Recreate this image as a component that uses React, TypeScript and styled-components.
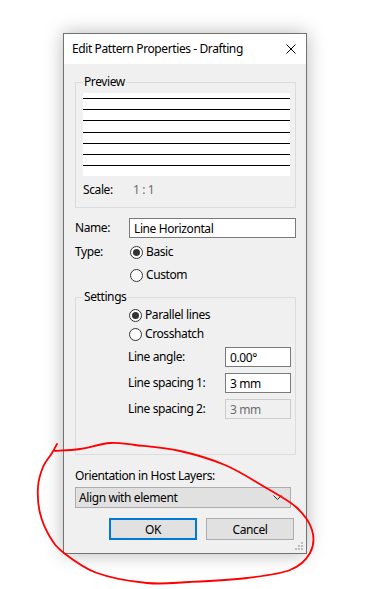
import React from "react";
import styled, { createGlobalStyle } from "styled-components";

const GlobalStyle = createGlobalStyle`
  html, body {
    margin: 0;
    padding: 0;
    background: #ffffff;
  }
  body {
    font-family: "Noto Sans", "Open Sans", sans-serif;
    font-size: 12px;
    letter-spacing: -0.4px;
    color: #000000;
  }
  input, button {
    font-family: "Noto Sans", "Open Sans", sans-serif;
    font-size: 12px;
    letter-spacing: -0.4px;
  }
`;

const Page = styled.div`
  position: relative;
  width: 388px;
  height: 589px;
  overflow: hidden;
  box-sizing: border-box;
  padding: 33px 0 0 63px;
`;

const Dialog = styled.div`
  position: relative;
  width: 244px;
  height: 521px;
  box-sizing: border-box;
  border: 1px solid #727272;
  background: #f0f0f0;
  box-shadow: 0 0 18px rgba(0, 0, 0, 0.28);
  display: flex;
  flex-direction: column;
`;

const TitleBar = styled.div`
  height: 30px;
  background: #ffffff;
  display: flex;
  align-items: center;
  justify-content: space-between;
  padding: 0 10px 0 8px;
`;

const Title = styled.span`
  line-height: 16px;
  white-space: nowrap;
`;

const CloseIcon = styled.svg`
  width: 10px;
  height: 10px;
  display: block;
`;

const Body = styled.div`
  display: flex;
  flex-direction: column;
  padding: 10px 10px 0 11px;
`;

const GroupBox = styled.fieldset<{ $height: number }>`
  margin: 0;
  padding: 0;
  min-inline-size: 0;
  height: ${(p) => p.$height}px;
  box-sizing: border-box;
  border: 1px solid #dcdcdc;
`;

const GroupLegend = styled.legend`
  margin-left: 7px;
  padding: 0 1px;
  line-height: 16px;
`;

const PreviewInner = styled.div`
  display: flex;
  flex-direction: column;
  padding: 3px 5px 0 7px;
`;

const PreviewCanvas = styled.svg`
  display: block;
  width: 207px;
  height: 83px;
  background: #ffffff;
`;

const ScaleRow = styled.div`
  display: flex;
  line-height: 16px;
  margin-top: 6px;
`;

const ScaleLabel = styled.span`
  width: 50px;
`;

const ScaleValue = styled.span`
  color: #6d6d6d;
`;

const FormRow = styled.div<{ $top: number }>`
  display: grid;
  grid-template-columns: 54px 1fr;
  align-items: center;
  margin-top: ${(p) => p.$top}px;
  min-height: 16px;
  line-height: 16px;
`;

const TopLabel = styled.span`
  align-self: start;
`;

const TextBox = styled.input<{ $disabled?: boolean }>`
  box-sizing: border-box;
  height: 20px;
  width: 100%;
  margin: 0;
  padding: 0 4px;
  color: ${(p) => (p.$disabled ? "#6d6d6d" : "#000000")};
  background: ${(p) => (p.$disabled ? "#f0f0f0" : "#ffffff")};
  border: 1px solid ${(p) => (p.$disabled ? "#cccccc" : "#7a7a7a")};
  outline: none;
`;

const RadioRow = styled.label`
  display: flex;
  align-items: center;
  gap: 3px;
  line-height: 16px;
  height: 16px;
`;

const RadioCircle = styled.span<{ $checked?: boolean }>`
  width: 13px;
  height: 13px;
  box-sizing: border-box;
  margin-left: 1px;
  border: 1px solid #333333;
  border-radius: 50%;
  background: #ffffff;
  display: inline-flex;
  align-items: center;
  justify-content: center;

  &::after {
    content: "";
    width: 7px;
    height: 7px;
    border-radius: 50%;
    background: #333333;
    display: ${(p) => (p.$checked ? "block" : "none")};
  }
`;

const RadioStack = styled.div<{ $gap: number }>`
  display: flex;
  flex-direction: column;
  gap: ${(p) => p.$gap}px;
`;

const SettingsBox = styled(GroupBox)`
  margin-top: 6px;
`;

const SettingsInner = styled.div`
  display: flex;
  flex-direction: column;
  padding: 2px 5px 0 52px;
`;

const FieldGrid = styled.div`
  display: grid;
  grid-template-columns: 97px 66px;
  row-gap: 6px;
  align-items: center;
  margin-top: 5px;
`;

const FieldLabel = styled.span`
  line-height: 16px;
`;

const PlainLabel = styled.div<{ $top: number }>`
  line-height: 16px;
  margin-top: ${(p) => p.$top}px;
`;

const ComboBox = styled.div`
  box-sizing: border-box;
  width: 216px;
  height: 21px;
  margin-top: 3px;
  padding: 0 8px 0 3px;
  display: flex;
  align-items: center;
  justify-content: space-between;
  background: #e1e1e1;
  border: 1px solid #adadad;
  line-height: 16px;
`;

const Chevron = styled.svg`
  width: 9px;
  height: 5px;
  display: block;
`;

const ButtonRow = styled.div`
  display: flex;
  justify-content: flex-end;
  gap: 9px;
  margin-top: 10px;
  padding-right: 2px;
`;

const DialogButton = styled.button<{ $primary?: boolean }>`
  box-sizing: border-box;
  width: 88px;
  height: 22px;
  margin: 0;
  padding: 0;
  color: #000000;
  background: #e1e1e1;
  border: ${(p) => (p.$primary ? "2px solid #0078d7" : "1px solid #adadad")};
`;

const Grip = styled.svg`
  position: absolute;
  right: 2px;
  bottom: 2px;
  width: 9px;
  height: 9px;
`;

const Annotation = styled.svg`
  position: absolute;
  left: 0;
  top: 0;
  width: 388px;
  height: 589px;
  pointer-events: none;
`;

const PREVIEW_LINES = [5.5, 16.5, 27.5, 39.5, 50.5, 61.5, 72.5];

const GRIP_DOTS = [
  [6, 0],
  [3, 3],
  [6, 3],
  [0, 6],
  [3, 6],
  [6, 6],
];

const LOOP: [number, number][] = [
  [55, 451],
  [80, 449],
  [110, 443],
  [135, 445],
  [180, 451],
  [225, 465],
  [263, 486],
  [296, 507],
  [312, 530],
  [310, 553],
  [290, 570],
  [247, 578],
  [190, 582],
  [147, 583],
  [97, 573],
  [64, 553],
  [50, 537],
  [40, 513],
  [38, 487],
  [43, 467],
  [52, 453],
  [57, 444],
];

// catmull-rom through the hand drawn points
function smoothPath(pts: [number, number][]) {
  let d = `M ${pts[0][0]} ${pts[0][1]}`;
  for (let i = 0; i < pts.length - 1; i++) {
    const p0 = pts[i - 1] || pts[i];
    const p1 = pts[i];
    const p2 = pts[i + 1];
    const p3 = pts[i + 2] || p2;
    const c1x = p1[0] + (p2[0] - p0[0]) / 6;
    const c1y = p1[1] + (p2[1] - p0[1]) / 6;
    const c2x = p2[0] - (p3[0] - p1[0]) / 6;
    const c2y = p2[1] - (p3[1] - p1[1]) / 6;
    d += ` C ${c1x} ${c1y} ${c2x} ${c2y} ${p2[0]} ${p2[1]}`;
  }
  return d;
}

export default function App() {
  return (
    <Page>
      <GlobalStyle />
      <Dialog>
        <TitleBar>
          <Title>Edit Pattern Properties - Drafting</Title>
          <CloseIcon viewBox="0 0 10 10">
            <path d="M0.5 0.5 L9.5 9.5 M9.5 0.5 L0.5 9.5" stroke="#000" strokeWidth="1" />
          </CloseIcon>
        </TitleBar>

        <Body>
          <GroupBox $height={134}>
            <GroupLegend>Preview</GroupLegend>
            <PreviewInner>
              <PreviewCanvas viewBox="0 0 207 83">
                {PREVIEW_LINES.map((y) => (
                  <line key={y} x1="0" x2="207" y1={y} y2={y} stroke="#000" strokeWidth="1" />
                ))}
              </PreviewCanvas>
              <ScaleRow>
                <ScaleLabel>Scale:</ScaleLabel>
                <ScaleValue>1 : 1</ScaleValue>
              </ScaleRow>
            </PreviewInner>
          </GroupBox>

          <FormRow $top={10}>
            <span>Name:</span>
            <TextBox defaultValue="Line Horizontal" readOnly />
          </FormRow>

          <FormRow $top={6}>
            <TopLabel>Type:</TopLabel>
            <RadioStack $gap={7}>
              <RadioRow>
                <RadioCircle $checked />
                Basic
              </RadioRow>
              <RadioRow>
                <RadioCircle />
                Custom
              </RadioRow>
            </RadioStack>
          </FormRow>

          <SettingsBox $height={166}>
            <GroupLegend>Settings</GroupLegend>
            <SettingsInner>
              <RadioStack $gap={3}>
                <RadioRow>
                  <RadioCircle $checked />
                  Parallel lines
                </RadioRow>
                <RadioRow>
                  <RadioCircle />
                  Crosshatch
                </RadioRow>
              </RadioStack>
              <FieldGrid>
                <FieldLabel>Line angle:</FieldLabel>
                <TextBox defaultValue="0.00°" readOnly />
                <FieldLabel>Line spacing 1:</FieldLabel>
                <TextBox defaultValue="3 mm" readOnly />
                <FieldLabel>Line spacing 2:</FieldLabel>
                <TextBox defaultValue="3 mm" readOnly disabled $disabled />
              </FieldGrid>
            </SettingsInner>
          </SettingsBox>

          <PlainLabel $top={13}>Orientation in Host Layers:</PlainLabel>
          <ComboBox>
            <span>Align with element</span>
            <Chevron viewBox="0 0 9 5">
              <path d="M0.5 0.5 L4.5 4.5 L8.5 0.5" fill="none" stroke="#333" strokeWidth="1" />
            </Chevron>
          </ComboBox>

          <ButtonRow>
            <DialogButton $primary>OK</DialogButton>
            <DialogButton>Cancel</DialogButton>
          </ButtonRow>
        </Body>

        <Grip viewBox="0 0 9 9">
          {GRIP_DOTS.map(([x, y]) => (
            <rect key={`${x}-${y}`} x={x} y={y} width="2" height="2" fill="#bcbcbc" />
          ))}
        </Grip>
      </Dialog>

      <Annotation viewBox="0 0 388 589">
        <path
          d={smoothPath(LOOP)}
          fill="none"
          stroke="#ff0000"
          strokeWidth="1.8"
          strokeLinecap="round"
          strokeLinejoin="round"
        />
      </Annotation>
    </Page>
  );
}
